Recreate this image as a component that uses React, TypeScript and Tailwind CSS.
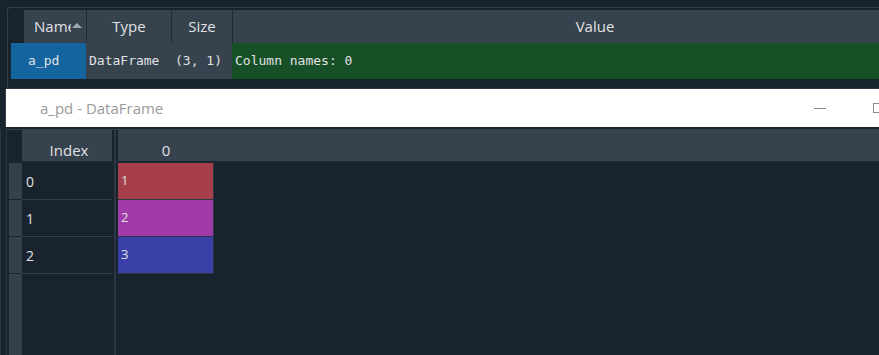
import React from 'react'

const mono = { fontFamily: '"DejaVu Sans Mono", "Liberation Mono", monospace' }
const sans = { fontFamily: '"Open Sans", "Noto Sans", sans-serif' }

const ROWS = [
  { idx: '0', val: '1', color: 'bg-[#a63f4b]' },
  { idx: '1', val: '2', color: 'bg-[#a03ba9]' },
  { idx: '2', val: '3', color: 'bg-[#3b40a9]' },
]

export default function App() {
  return (
    <div className="w-[879px] h-[355px] overflow-hidden bg-[#19232d] text-[#e0e1e3] flex flex-col" style={sans}>
      {/* variable explorer */}
      <div className="h-[89px] pt-[7px] pl-[7px] flex flex-col">
        <div className="flex-1 border-l border-t border-[#32414b] rounded-tl-[3px] pt-[2px] flex flex-col">
          <div className="flex h-[33px] pl-[16px]">
            <div className="w-[62px] bg-[#36434e] flex items-center pl-[10px] gap-[1px]">
              <span className="w-[37px] overflow-hidden whitespace-nowrap text-[15px]">Name</span>
              <span className="w-0 h-0 border-l-[5px] border-r-[5px] border-b-[5px] border-l-transparent border-r-transparent border-b-[#9da9b5] mb-[3px]" />
            </div>
            <div className="w-[1px] bg-[#1e2a34]" />
            <div className="w-[84px] bg-[#36434e] flex items-center justify-center text-[15px]">Type</div>
            <div className="w-[1px] bg-[#1e2a34]" />
            <div className="w-[60px] bg-[#36434e] flex items-center justify-center text-[15px]">Size</div>
            <div className="w-[1px] bg-[#1e2a34]" />
            <div className="flex-1 bg-[#36434e] flex items-center justify-center text-[15px] pl-[78px]">Value</div>
          </div>
          <div className="flex h-[36px] pl-[3px] text-[13px]" style={mono}>
            <div className="w-[75px] bg-[#1464a0] flex items-center pl-[17px]">a_pd</div>
            <div className="w-[85px] bg-[#36424d] flex items-center pl-[3px]">DataFrame</div>
            <div className="w-[61px] bg-[#36424d] flex items-center pl-[4px]">(3, 1)</div>
            <div className="flex-1 bg-[#174f26] flex items-center pl-[3px]">Column names: 0</div>
          </div>
          <div className="flex-1 border-b border-[#2b3843]" />
        </div>
      </div>

      {/* window title bar */}
      <div className="flex h-[38px]">
        <div className="w-[6px] border-r border-[#32414b]" />
        <div className="flex-1 bg-white flex items-center">
          <span className="pl-[34px] text-[15px] text-[#9a9a9a]">a_pd - DataFrame</span>
          <span className="ml-auto w-[12px] h-[1px] bg-[#8a8a8a] mr-[47px]" />
          <span className="w-[10px] h-[10px] border border-[#8a8a8a] mr-[-4px]" />
        </div>
      </div>

      {/* dataframe editor */}
      <div className="flex-1 flex pt-[2px]">
        <div className="w-[7px] border-r border-l border-[#2b3843]" />
        <div className="flex-1 flex flex-col border-t border-[#32414b]">
          {/* header row */}
          <div className="flex h-[31px] text-[15px]">
            <div className="w-[15px]" />
            <div className="w-[90px] bg-[#36434e] flex items-end justify-center pl-[4px]">Index</div>
            <div className="w-[6px] flex justify-center relative">
              <div className="w-[2px] bg-[#2b3843]" />
              <div className="absolute bottom-[-3px] left-[1px] w-[4px] h-[4px] rounded-full bg-[#2b3843]" />
            </div>
            <div className="w-[96px] bg-[#36434e] flex items-end justify-center">0</div>
            <div className="flex-1 bg-[#36434e]" />
          </div>
          <div className="h-[2px] bg-[#1b2530]" />
          {/* body */}
          <div className="flex-1 flex text-[14px]">
            <div className="w-[2px]" />
            <div className="w-[13px] flex flex-col gap-[1px] bg-[#19232d]">
              {ROWS.map(r => (
                <div key={r.idx} className="h-[36px] bg-[#32414b]" />
              ))}
              <div className="flex-1 bg-[#32414b]" />
            </div>
            <div className="w-[90px] flex flex-col">
              {ROWS.map(r => (
                <div key={r.idx} className="h-[37px] border-b border-[#32414b] flex items-center pl-[4px]">{r.idx}</div>
              ))}
            </div>
            <div className="w-[6px] flex justify-center">
              <div className="w-[2px] bg-[#2b3843]" />
            </div>
            <div className="w-[96px] flex flex-col">
              {ROWS.map(r => (
                <div key={r.idx} className={`h-[37px] border-b border-r border-[#2b3843] ${r.color} flex items-center pl-[3px] text-[13px]`}>{r.val}</div>
              ))}
            </div>
            <div className="flex-1" />
          </div>
        </div>
      </div>
    </div>
  )
}
